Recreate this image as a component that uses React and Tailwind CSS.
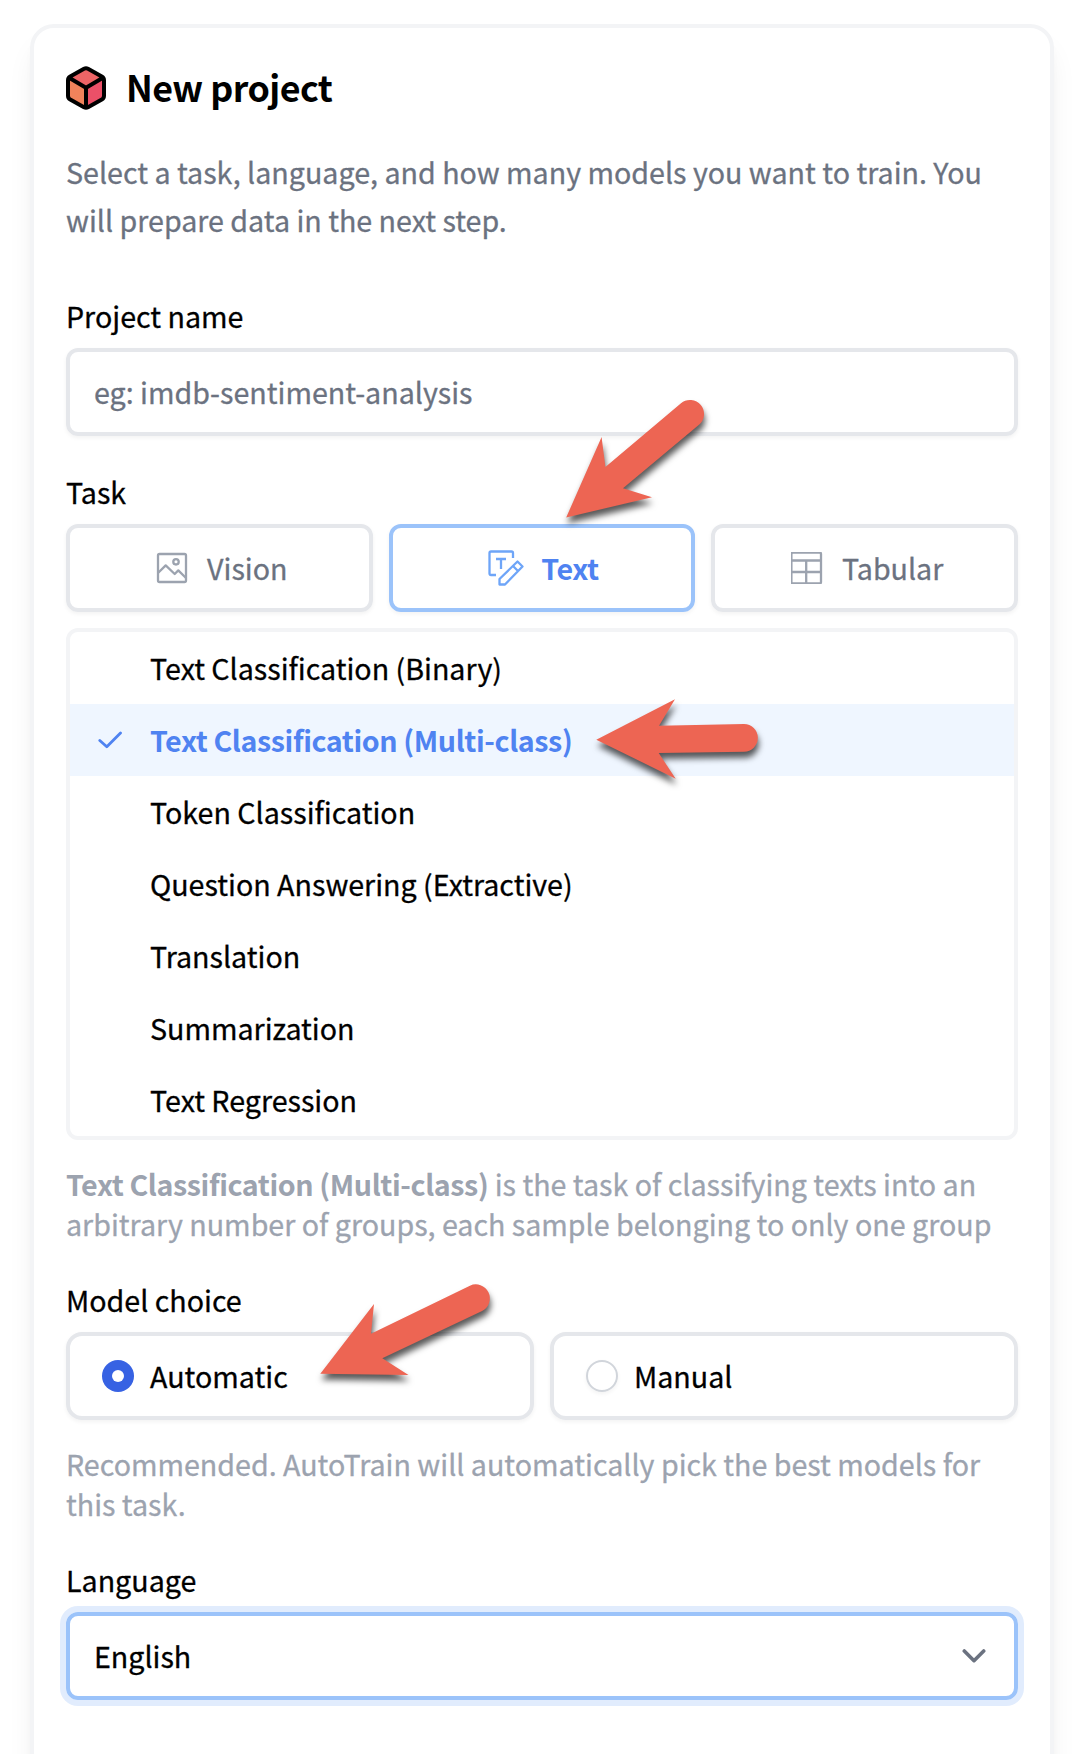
import { useState } from 'react'

const tasks = [
  'Text Classification (Binary)',
  'Text Classification (Multi-class)',
  'Token Classification',
  'Question Answering (Extractive)',
  'Translation',
  'Summarization',
  'Text Regression',
]

const CubeLogo = () => (
  <svg className="w-10 h-11" viewBox="0 0 40 44" fill="none">
    <path d="M20 3 L37 12.5 L20 22 L3 12.5 Z" fill="#ed6466" />
    <path d="M3 12.5 L20 22 V41 L3 31.5 Z" fill="#f1835b" />
    <path d="M37 12.5 L20 22 V41 L37 31.5 Z" fill="#eb5068" />
    <path
      d="M18 2.7 Q20 1.6 22 2.7 L35.8 10.4 Q38 11.7 38 14.2 V29.8 Q38 32.3 35.8 33.6 L22 41.3 Q20 42.4 18 41.3 L4.2 33.6 Q2 32.3 2 29.8 V14.2 Q2 11.7 4.2 10.4 Z M3.5 12 L20 21.8 L36.5 12 M20 21.8 V41"
      stroke="#000"
      strokeWidth="4"
      strokeLinejoin="round"
    />
  </svg>
)

const VisionIcon = () => (
  <svg className="w-8 h-8" viewBox="0 0 32 32" fill="none" stroke="currentColor" strokeWidth="2.3" strokeLinejoin="round">
    <rect x="2" y="2" width="28" height="28" rx="1.5" />
    <circle cx="20" cy="9.8" r="2.7" />
    <path d="M2 21 L9.7 13.4 L18.7 22 L22.3 18.4 L30 26" />
  </svg>
)

const TextIcon = () => (
  <svg className="w-9 h-9 -mr-0.5" viewBox="0 0 36 36" fill="none" stroke="currentColor" strokeWidth="2.3" strokeLinejoin="round">
    <path d="M8 25 H3 Q1.5 25 1.5 23.5 V3 Q1.5 1.5 3 1.5 H23.5 Q25 1.5 25 3 V8" />
    <path d="M8 9 H18 M13 9 V19" />
    <path d="M11.5 34.5 V29 L29.5 11.5 L34.5 16.5 L17 34.5 Z M25 16 L30 21" />
  </svg>
)

const TabularIcon = () => (
  <svg className="w-8 h-8" viewBox="0 0 32 32" fill="none" stroke="currentColor" strokeWidth="2.3" strokeLinejoin="round">
    <rect x="0.4" y="0.5" width="29.6" height="31" rx="1.5" />
    <path d="M0.4 8.5 H30 M0.4 20 H30 M15.2 8.5 V31" />
  </svg>
)

const tabs = [
  { name: 'Vision', icon: VisionIcon },
  { name: 'Text', icon: TextIcon },
  { name: 'Tabular', icon: TabularIcon },
]

// Red pointers laid over the form
const Arrows = () => (
  <svg
    className="absolute inset-0 w-full h-full pointer-events-none"
    viewBox="0 0 1080 1754"
    fill="#ed6553"
  >
    <g className="drop-shadow-[1px_6px_3px_rgba(0,0,0,0.65)]">
      <path d="M566.2 517.5 L601.6 437 L605.4 467 L681 403.2 A14 14 0 0 1 699 424.8 L623 488.3 L652 497.3 Z" />
      <path d="M596.3 739.7 L675 699.3 L659 725.7 L744 724 A13.8 13.8 0 0 1 744 751.7 L658.7 753 L675.7 778.7 Z" />
      <path d="M320.3 1373.7 L374 1304 L371 1333.7 L469.9 1285.7 A14 14 0 0 1 482.1 1310.9 L382.3 1358.3 L408.5 1375 Z" />
    </g>
  </svg>
)

const Label = ({ children }) => (
  <label className="block mt-8 mb-2 leading-[48px]">
    {children}
  </label>
)

const App = () => {
  const [tab, setTab] = useState('Text')
  const [task, setTask] = useState(tasks[1])
  const [model, setModel] = useState('Automatic')

  return (
    <div className="relative h-[1754px] overflow-hidden bg-white pt-6 pl-[30px] pr-[26px] font-['Noto_Sans_CJK_JP',sans-serif] text-[28.63px] text-black [-webkit-text-stroke:0.3px]">
      <main className="h-[1800px] rounded-[24px] border-4 border-[#f3f4f6] p-8 shadow-[0_20px_30px_-6px_rgba(0,0,0,0.08),0_8px_12px_-4px_rgba(0,0,0,0.04)]">
        <div className="flex items-center h-14">
          <CubeLogo />
          <h1 className="ml-5 pb-1 text-[35.8px] leading-[52px] font-bold tracking-[-0.55px] [-webkit-text-stroke:0px]">New project</h1>
        </div>
        <p className="mt-8 mb-12 leading-[48px] text-[#6b7280]">
          Select a task, language, and how many models you want to train. You will prepare data in the next step.
        </p>

        <label htmlFor="name" className="block mb-2 leading-[48px]">Project name</label>
        <input
          id="name"
          placeholder="eg: imdb-sentiment-analysis"
          className="block w-full h-[88px] px-6 pb-0.5 border-4 border-[#e5e7eb] rounded-xl shadow-[0_2px_4px_rgba(0,0,0,0.05)] placeholder:text-[#6b7280] outline-none"
        />

        <Label>Task</Label>
        <div className="grid grid-cols-3 gap-4">
          {tabs.map(({ name, icon: Icon }) => (
            <button
              key={name}
              onClick={() => setTab(name)}
              className={`flex items-center justify-center gap-[19px] h-[88px] border-4 rounded-xl shadow-[0_2px_4px_rgba(0,0,0,0.05)] ${
                tab === name
                  ? 'pl-[3px] border-[#9bc3fa] text-[#4f83f1] font-bold tracking-[-0.38px] [-webkit-text-stroke:0px]'
                  : 'pl-[5px] border-[#e5e7eb] text-[#6b7280]'
              }`}
            >
              <span className={tab === name ? 'text-[#6ea5f8]' : 'text-[#9ca3af]'}>
                <Icon />
              </span>
              {name}
            </button>
          ))}
        </div>

        <ul className="mt-4 border-4 border-[#f3f4f6] rounded-xl overflow-hidden">
          {tasks.map((item) => (
            <li
              key={item}
              onClick={() => setTask(item)}
              className={`flex items-center h-[72px] ${
                task === item ? 'bg-[#eff6ff] text-[#4f83f1] font-bold tracking-[-0.39px] [-webkit-text-stroke:0px]' : ''
              }`}
            >
              <span className="w-20 pl-7">
                {task === item && (
                  <svg className="w-6 h-6" viewBox="0 0 24 24" fill="none" stroke="currentColor" strokeWidth="2.8" strokeLinecap="round" strokeLinejoin="round">
                    <path d="M1.8 12.5 L8.8 18.8 L22.5 5" />
                  </svg>
                )}
              </span>
              {item}
            </li>
          ))}
        </ul>
        <p className="mt-6 leading-10 text-[#9ca3af]">
          <span className="font-bold tracking-[-0.39px] [-webkit-text-stroke:0px]">Text Classification (Multi-class)</span> is the task of classifying texts into an
          arbitrary number of groups, each sample belonging to only one group
        </p>

        <Label>Model choice</Label>
        <div className="grid grid-cols-2 gap-4">
          {['Automatic', 'Manual'].map((name) => (
            <button
              key={name}
              onClick={() => setModel(name)}
              className="flex items-center gap-4 h-[88px] px-8 border-4 border-[#e5e7eb] rounded-2xl shadow-[0_2px_4px_rgba(0,0,0,0.05)]"
            >
              {model === name ? (
                <span className="flex items-center justify-center w-8 h-8 rounded-full bg-[#3762e3]">
                  <span className="w-3 h-3 rounded-full bg-white" />
                </span>
              ) : (
                <span className="w-8 h-8 rounded-full border-2 border-[#d1d5db] shadow-[0_2px_4px_rgba(0,0,0,0.05)]" />
              )}
              {name}
            </button>
          ))}
        </div>
        <p className="mt-6 leading-10 text-[#9ca3af]">
          Recommended. AutoTrain will automatically pick the best models for this task.
        </p>

        <Label>Language</Label>
        <button className="flex items-center justify-between w-full h-[88px] pl-6 pr-7 border-4 border-[#9bc3fa] rounded-xl ring-[6px] ring-[#e1ecfd]">
          English
          <svg className="w-6 h-4 text-[#6b7280]" viewBox="0 0 24 16" fill="none" stroke="currentColor" strokeWidth="3.6" strokeLinecap="round" strokeLinejoin="round">
            <path d="M2.3 3 L12 12.7 L21.7 3" />
          </svg>
        </button>
      </main>
      <Arrows />
    </div>
  )
}

export default App
